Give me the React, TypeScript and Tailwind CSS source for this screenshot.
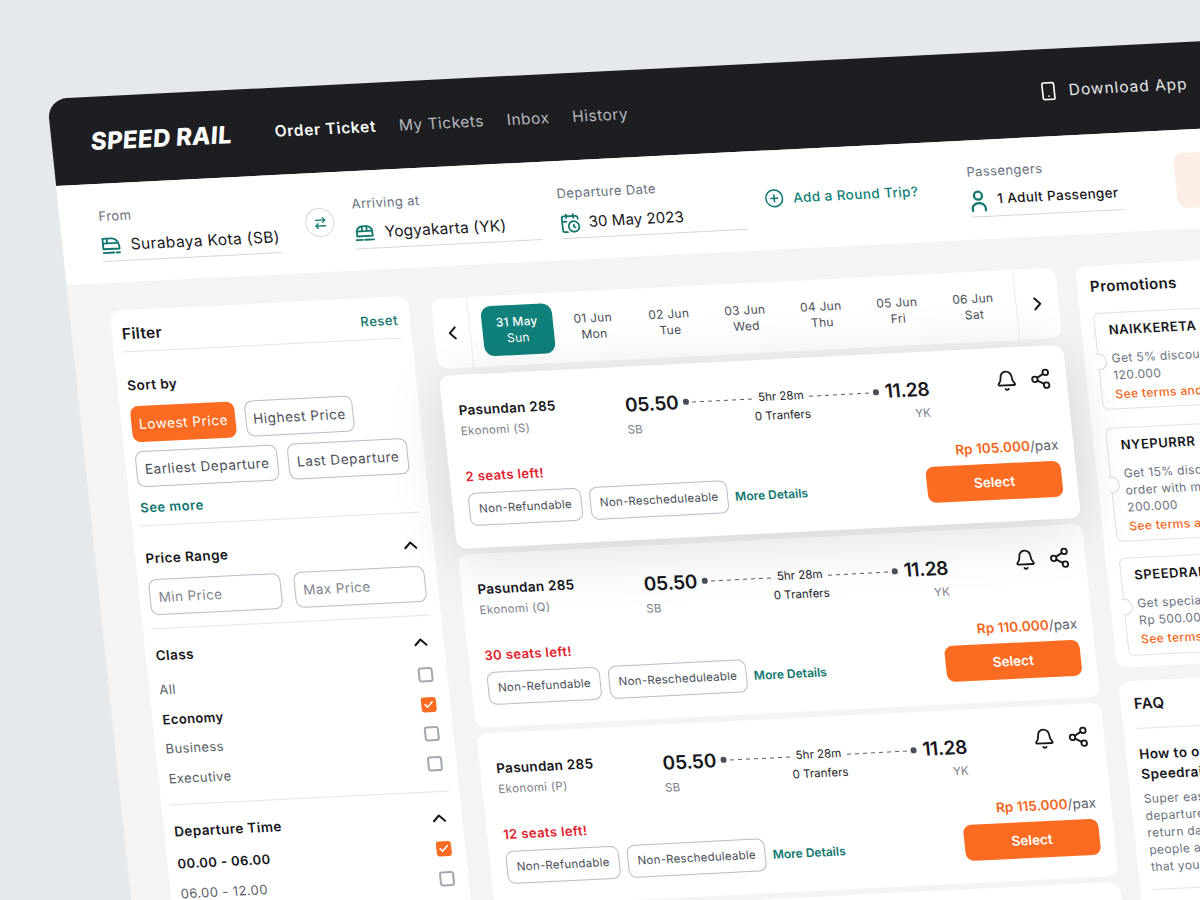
import React from 'react';
import { ArrowRightLeft, Bell, CalendarClock, Check, ChevronLeft, ChevronRight, ChevronUp, CirclePlus, Share2, Smartphone } from 'lucide-react';

const SideTrain = () => (
  <svg className="shrink-0" width="19" height="18" viewBox="0 0 20 19" fill="none" stroke="#0f766e" strokeWidth="2" strokeLinecap="round" strokeLinejoin="round">
    <path d="M1.500 2h9.500c3.500 0 6.500 3 7.500 8v3h-17z" />
    <path d="M6 2v5M1.500 7h14.500" />
    <path d="M1.500 17h11M15 17h3.500" />
  </svg>
);

const FrontTrain = () => (
  <svg className="shrink-0" width="20" height="18" viewBox="0 0 22 19" fill="none" stroke="#0f766e" strokeWidth="2" strokeLinecap="round" strokeLinejoin="round">
    <path d="M2.500 13v-5c0-3.500 3-6 8.500-6s8.500 2.500 8.500 6v5z" />
    <path d="M8.500 2.500v5M13.500 2.500v5M2.500 7.500h17" />
    <path d="M1.500 17h7M11 17h9.500" />
  </svg>
);

const PersonIcon = () => (
  <svg className="shrink-0" width="18" height="22" viewBox="0 0 18 22" fill="none" stroke="#0f766e" strokeWidth="2.200" strokeLinecap="round">
    <circle cx="9" cy="5.500" r="4" />
    <path d="M2.500 20.500v-2.500a6.500 5 0 0 1 13 0v2.500" />
  </svg>
);

const Field = ({ label, value, icon, width, className, valueClass }: { label: string; value: string; icon: React.ReactNode; width: string; className: string; valueClass: string }) => (
  <div className={`shrink-0 ${width} ${className}`}>
    <div className="text-[13px] leading-[18px] text-[#6b7280] tracking-[0.03em]">{label}</div>
    <div className="mt-[10px] flex items-center gap-[10px] h-[22px] pb-[4px] border-b border-[#d4d7dc] box-content">
      {icon}
      <span className={`leading-[18px] text-[#17181c] whitespace-nowrap ${valueClass}`}>{value}</span>
    </div>
  </div>
);

const Divider = ({ className }: { className: string }) => <div className={`h-px bg-[#e3e5e8] ${className}`} />;

const Chip = ({ label, active, width }: { label: string; active?: boolean; width: string }) => (
  <div
    className={`${width} h-[36px] rounded-[8px] flex items-center justify-center text-[13.5px] tracking-[0.04em] whitespace-nowrap ${
      active ? 'bg-[#fb6c22] text-white' : 'border border-[#b9bcc4] text-[#4b4f59]'
    }`}
  >
    {label}
  </div>
);

const Box = ({ checked }: { checked?: boolean }) =>
  checked ? (
    <span className="w-[15px] h-[15px] -translate-y-[2px] rounded-[3px] bg-[#fb6c22] flex items-center justify-center">
      <Check size={11} strokeWidth={3.5} color="white" />
    </span>
  ) : (
    <span className="w-[15px] h-[15px] -translate-y-[2px] rounded-[3px] border-2 border-[#a3a7b0]" />
  );

const CheckRow = ({ label, checked }: { label: string; checked?: boolean }) => (
  <div className="h-[29.5px] flex items-center justify-between pl-[2px] pr-[4px]">
    <span className={`text-[13px] tracking-[0.03em] ${checked ? 'font-semibold text-[#17181c]' : 'text-[#5b5f69]'}`}>{label}</span>
    <Box checked={checked} />
  </div>
);

const SectionHead = ({ title }: { title: string }) => (
  <div className="h-[20px] flex items-center justify-between pl-[2px] pr-[2px]">
    <span className="text-[13.5px] font-semibold text-[#17181c] tracking-[0.03em]">{title}</span>
    <ChevronUp size={22} strokeWidth={2.200} color="#17181c" />
  </div>
);

const FilterCard = () => (
  <div className="w-[298px] shrink-0 bg-white rounded-[10px] pl-[8px] pr-[10px] pt-[14px] pb-[40px]">
    <div className="h-[20px] flex items-center justify-between px-[2px]">
      <span className="text-[15.5px] font-semibold text-[#17181c] tracking-[0.02em]">Filter</span>
      <span className="text-[13px] font-medium text-[#0f766e] tracking-[0.04em]">Reset</span>
    </div>
    <Divider className="mt-[7px]" />
    <div className="mt-[24px] px-[2px] text-[13.5px] leading-[18px] font-semibold text-[#17181c] tracking-[0.03em]">Sort by</div>
    <div className="mt-[12px] px-[2px] flex gap-[10px]">
      <Chip label="Lowest Price" active width="w-[104px]" />
      <Chip label="Highest Price" width="w-[108px]" />
    </div>
    <div className="mt-[9px] px-[2px] flex gap-[10px]">
      <Chip label="Earliest Departure" width="w-[142px]" />
      <Chip label="Last Departure" width="w-[120px]" />
    </div>
    <div className="mt-[11px] px-[2px] text-[13px] leading-[18px] font-semibold text-[#0f766e] tracking-[0.04em]">See more</div>
    <Divider className="mt-[9px]" />
    <div className="mt-[22px]">
      <SectionHead title="Price Range" />
    </div>
    <div className="mt-[11px] px-[2px] flex gap-[13px]">
      <div className="w-[133px] h-[36px] rounded-[8px] border border-[#b9bcc4] flex items-center pl-[8px] text-[13.5px] text-[#80848e] tracking-[0.03em]">Min Price</div>
      <div className="w-[133px] h-[36px] rounded-[8px] border border-[#b9bcc4] flex items-center pl-[8px] text-[13.5px] text-[#80848e] tracking-[0.03em]">Max Price</div>
    </div>
    <Divider className="mt-[13px]" />
    <div className="mt-[16px]">
      <SectionHead title="Class" />
    </div>
    <div className="mt-[10px]">
      <CheckRow label="All" />
      <CheckRow label="Economy" checked />
      <CheckRow label="Business" />
      <CheckRow label="Executive" />
    </div>
    <Divider className="mt-[11px]" />
    <div className="mt-[16px]">
      <SectionHead title="Departure Time" />
    </div>
    <div className="mt-[8px]">
      <CheckRow label="00.00 - 06.00" checked />
      <CheckRow label="06.00 - 12.00" />
    </div>
  </div>
);

const dates = [
  ['31 May', 'Sun'],
  ['01 Jun', 'Mon'],
  ['02 Jun', 'Tue'],
  ['03 Jun', 'Wed'],
  ['04 Jun', 'Thu'],
  ['05 Jun', 'Fri'],
  ['06 Jun', 'Sat'],
];

const DateStrip = () => (
  <div className="h-[70px] bg-white rounded-[10px] flex">
    <div className="w-[36px] shrink-0 border-r border-[#eceef0] flex items-center justify-center">
      <ChevronLeft size={22} strokeWidth={2.200} color="#17181c" />
    </div>
    <div className="w-[545px] shrink-0 pl-[9px] flex items-center">
      {dates.map(([day, week], i) => (
        <div key={day} className="w-[76px] shrink-0 flex justify-center">
          <div
            className={`w-[71px] h-[50px] rounded-[10px] flex flex-col items-center justify-center text-[12px] leading-[16px] tracking-[0.02em] ${
              i === 0 ? 'bg-[#10807a] text-white' : 'text-[#4b4f59]'
            }`}
          >
            <span className={i === 0 ? 'font-medium' : ''}>{day}</span>
            <span>{week}</span>
          </div>
        </div>
      ))}
    </div>
    <div className="flex-1 border-l border-[#eceef0] flex items-center justify-center">
      <ChevronRight size={22} strokeWidth={2.200} color="#17181c" />
    </div>
  </div>
);

const TicketCard = ({ cls, seats, price, first }: { cls: string; seats: string; price: string; first?: boolean }) => (
  <div className={`h-[173px] bg-white rounded-[10px] pt-[24px] pb-[22px] pl-[16px] pr-[15px] flex flex-col justify-between ${first ? 'relative z-10 shadow-[0_10px_60px_rgba(0,0,0,0.13)]' : ''}`}>
    <div className="flex">
      <div className="w-[166px] shrink-0 pt-[1.500px]">
        <div className="text-[13.5px] leading-[18px] font-semibold text-[#17181c] tracking-[0.02em]">Pasundan 285</div>
        <div className="mt-[3px] text-[11.5px] leading-[18px] text-[#7c808a] tracking-[0.03em]">{cls}</div>
      </div>
      <div className="w-[58px] shrink-0 pt-[3px]">
        <div className="text-[19px] leading-[24px] font-semibold text-[#17181c] tracking-[-0.01em]">05.50</div>
        <div className="mt-[4px] text-[11.5px] leading-[16px] text-[#7c808a]">SB</div>
      </div>
      <div className="w-[196px] shrink-0 pt-[2px]">
        <div className="h-[24px] flex items-center gap-[3px]">
          <span className="w-[6px] h-[6px] rounded-full bg-[#4b4f59] shrink-0" />
          <span className="flex-1 h-px bg-[repeating-linear-gradient(90deg,#5b5f69_0_4px,transparent_4px_8px)]" />
          <span className="text-[11.5px] text-[#26272c] px-[2px] whitespace-nowrap">5hr 28m</span>
          <span className="flex-1 h-px bg-[repeating-linear-gradient(90deg,#5b5f69_0_4px,transparent_4px_8px)]" />
          <span className="w-[6px] h-[6px] rounded-full bg-[#4b4f59] shrink-0" />
        </div>
        <div className="-mt-[2px] text-center text-[11.5px] leading-[16px] text-[#26272c]">0 Tranfers</div>
      </div>
      <div className="ml-[6px] w-[46px] shrink-0 pt-[2px]">
        <div className="text-[19px] leading-[24px] font-semibold text-[#17181c] tracking-[-0.02em]">11.28</div>
        <div className="mt-[3px] pl-[28px] text-[11.5px] leading-[16px] text-[#7c808a]">YK</div>
      </div>
      <div className="ml-auto -mt-[2px] flex gap-[12px] h-[22px]">
        <Bell size={22} strokeWidth={2} color="#17181c" />
        <Share2 size={22} strokeWidth={2} color="#17181c" />
      </div>
    </div>
    <div className="flex items-end justify-between">
      <div>
        <div className="text-[13px] leading-[18px] font-semibold text-[#e1202c] tracking-[0.03em]">{seats}</div>
        <div className="mt-[8px] flex items-center">
          <div className="w-[113px] h-[33px] rounded-[8px] border border-[#b9bcc4] flex items-center justify-center text-[11.5px] text-[#4b4f59] tracking-[0.02em]">Non-Refundable</div>
          <div className="ml-[8px] w-[138px] h-[33px] rounded-[8px] border border-[#b9bcc4] flex items-center justify-center text-[11.5px] text-[#4b4f59] tracking-[0.02em]">Non-Rescheduleable</div>
          <div className="ml-[7px] text-[12px] font-semibold text-[#0f766e] whitespace-nowrap">More Details</div>
        </div>
      </div>
      <div className="flex flex-col items-end">
        <div className="text-[13.5px] leading-[18px] tracking-[0.005em]">
          <span className="font-semibold text-[#f5651a]">{price}</span>
          <span className="text-[#5b5f69]">/pax</span>
        </div>
        <div className="mt-[7px] w-[135px] h-[36px] rounded-[8px] bg-[#fb6c22] text-white text-[13.5px] font-semibold flex items-center justify-center">Select</div>
      </div>
    </div>
  </div>
);

const Coupon = ({ code, lines, height, className }: { code: string; lines: string[]; height: string; className: string }) => (
  <div className={`relative ${height} ${className} border border-[#dfe1e5] rounded-[6px] pl-[13px] pt-[7px] whitespace-nowrap`}>
    <span className="absolute -left-[9px] top-1/2 -translate-y-1/2 w-[17px] h-[17px] rounded-full bg-white border border-[#d6d8dd] [clip-path:inset(0_0_0_38%)]" />
    <div className="text-[13px] leading-[18px] font-semibold text-[#17181c] tracking-[0.04em]">{code}</div>
    <div className="mt-[11px] text-[12px] leading-[17px] text-[#6b7280] tracking-[0.03em]">
      {lines.map((line) => (
        <div key={line}>{line}</div>
      ))}
    </div>
    <div className="mt-[2px] text-[12px] leading-[18px] font-medium text-[#f5651a] tracking-[0.03em]">See terms and conditions</div>
  </div>
);

const RightColumn = () => (
  <div className="mt-[4px] ml-[20px] w-[300px] shrink-0">
    <div className="bg-white rounded-[10px] px-[13px] pt-[12px] pb-[11px]">
      <div className="text-[15px] leading-[18px] font-semibold text-[#17181c] tracking-[0.025em]">Promotions</div>
      <Coupon code="NAIKKERETA" lines={['Get 5% discount with min order Rp', '120.000']} height="h-[97px]" className="mt-[17px]" />
      <Coupon code="NYEPURRR" lines={['Get 15% discount with minimum', 'order with minimum purchase Rp', '200.000']} height="h-[114px]" className="mt-[18px]" />
      <Coupon code="SPEEDRAIL" lines={['Get special discount with order', 'Rp 500.000']} height="h-[98px]" className="mt-[16px]" />
    </div>
    <div className="mt-[14px] bg-white rounded-[10px] px-[13px] pt-[13px] pb-[20px]">
      <div className="text-[15px] leading-[20px] font-semibold text-[#17181c] tracking-[0.025em]">FAQ</div>
      <Divider className="mt-[14px]" />
      <div className="mt-[15px] text-[13.5px] leading-[20px] font-semibold text-[#17181c] tracking-[0.03em]">
        How to order a ticket on
        <br />
        Speedrail?
      </div>
      <div className="mt-[6px] text-[12px] leading-[17px] text-[#6b7280] tracking-[0.03em] whitespace-nowrap">
        Super easy! Pick your origin and
        <br />
        departure station, then your
        <br />
        return date and how many
        <br />
        people are joining the trip
        <br />
        that you want to book.
      </div>
      <Divider className="mt-[14px]" />
    </div>
  </div>
);

export default function App() {
  return (
    <div className="w-[1200px] h-[900px] overflow-hidden bg-[#e5e9ec] font-[Inter,sans-serif]">
      <div className="w-[1280px] h-[1100px] origin-top-left [transform:matrix(1,-0.05,0.105,1,47,99)] bg-[#f4f4f5] rounded-t-[20px]">
        <header className="h-[87px] bg-[#1d1e22] rounded-t-[20px] flex items-center pl-[39px] pr-[144px] text-white">
          <div className="w-[184px] shrink-0 mt-[3px] text-[24px] font-extrabold italic tracking-[0.01em]">SPEED RAIL</div>
          <nav className="flex gap-[23px] text-[15.500px] tracking-[0.03em] text-[#b6b8bd]">
            <span className="font-semibold text-white tracking-[0.045em]">Order Ticket</span>
            <span>My Tickets</span>
            <span>Inbox</span>
            <span>History</span>
          </nav>
          <div className="ml-auto -mt-[4px] flex items-center gap-[10px] text-[15.500px] tracking-[0.06em] text-[#e8e9eb]">
            <Smartphone size={20} strokeWidth={2} color="white" />
            Download App
          </div>
        </header>
        <section className="h-[99px] bg-white pl-[39px] pt-[23px] flex items-start">
          <Field label="From" value="Surabaya Kota (SB)" icon={<SideTrain />} width="w-[179px]" className="" valueClass="text-[15.5px] tracking-[0.025em]" />
          <div className="ml-[26px] mt-[12px] w-[29px] h-[29px] shrink-0 rounded-full border border-[#d4d7dc] flex items-center justify-center">
            <ArrowRightLeft size={14} strokeWidth={2.200} color="#0f766e" />
          </div>
          <Field label="Arriving at" value="Yogyakarta (YK)" icon={<FrontTrain />} width="w-[186px]" className="ml-[19px]" valueClass="text-[15.5px] tracking-[0.01em]" />
          <Field label="Departure Date" value="30 May 2023" icon={<CalendarClock className="shrink-0" size={21} strokeWidth={2} color="#0f766e" />} width="w-[187px]" className="ml-[19px]" valueClass="text-[15px] tracking-[0.005em] -ml-[2px]" />
          <div className="ml-[19px] w-[204px] shrink-0 mt-[15px] flex items-center gap-[9px] text-[13.5px] font-medium text-[#0f7f76] tracking-[0.03em]">
            <CirclePlus size={20} strokeWidth={1.8} color="#0f766e" />
            Add a Round Trip?
          </div>
          <Field label="Passengers" value="1 Adult Passenger" icon={<PersonIcon />} width="w-[153px]" className="-mt-[1px]" valueClass="text-[13.5px] font-medium tracking-[0.025em] -translate-y-[2px]" />
          <div className="ml-[54px] w-[150px] h-[55px] rounded-[10px] bg-[#fdeee5]" />
        </section>
        <main className="pl-[40px] pt-[28px] flex items-start">
          <FilterCard />
          <div className="ml-[23px] mt-[4px] w-[624px] shrink-0 flex flex-col">
            <DateStrip />
            <div className="mt-[7px] flex flex-col gap-[6px]">
              <TicketCard cls="Ekonomi (S)" seats="2 seats left!" price="Rp 105.000" first />
              <TicketCard cls="Ekonomi (Q)" seats="30 seats left!" price="Rp 110.000" />
              <TicketCard cls="Ekonomi (P)" seats="12 seats left!" price="Rp 115.000" />
              <div className="h-[173px] bg-white rounded-[10px]" />
            </div>
          </div>
          <RightColumn />
        </main>
      </div>
    </div>
  );
}
